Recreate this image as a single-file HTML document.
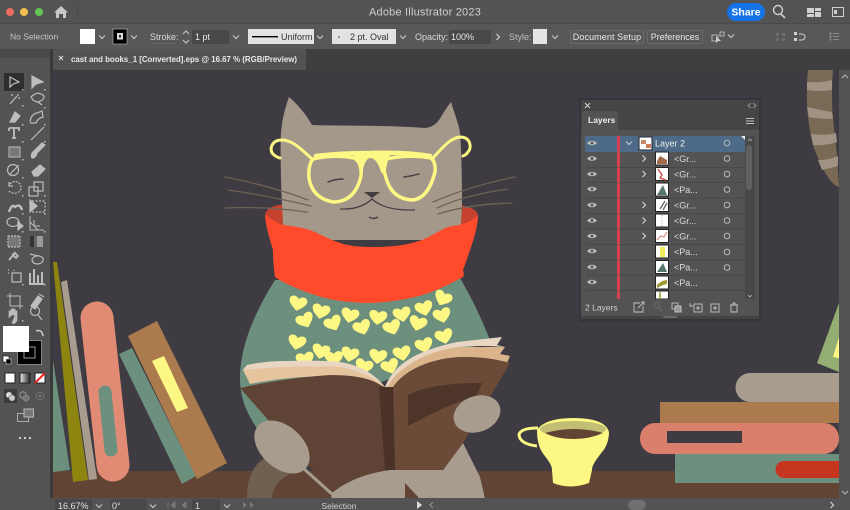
<!DOCTYPE html>
<html><head><meta charset="utf-8"><style>
html,body{margin:0;padding:0;background:#3e3b42;width:850px;height:510px;overflow:hidden}
svg{display:block}
text{font-family:"Liberation Sans",sans-serif}
</style></head><body>
<svg width="850" height="510" viewBox="0 0 850 510" xmlns="http://www.w3.org/2000/svg">
<defs>
<path id="h" d="M0,8 C-4,5 -9,1.5 -9,-2.5 C-9,-7 -3,-8 0,-4 C3,-8 9,-7 9,-2.5 C9,1.5 4,5 0,8Z" fill="#fdf784"/>
<path id="c" d="M-3,-1.5 L0,1.5 L3,-1.5" fill="none" stroke="#c4c4c4" stroke-width="1.2"/>
<path id="r" d="M-1.5,-3 L1.5,0 L-1.5,3" fill="none" stroke="#d0d0d0" stroke-width="1.2"/>
<g id="e"><path d="M-5,0 Q0,-4.5 5,0 Q0,4.5 -5,0Z" fill="#c4c4c4"/><circle r="1.5" fill="#535353"/></g>
<linearGradient id="g"><stop offset="0" stop-color="#eee"/><stop offset="1" stop-color="#222"/></linearGradient>
</defs>

<!-- canvas -->
<rect width="850" height="510" fill="#3e3b42"/>
<!-- shelf -->
<rect x="53" y="471" width="786" height="28" fill="#624434"/>

<!-- left books -->
<polygon points="53,360 70,470 53,472" fill="#6d8f7d"/>
<polygon points="53,262 57,262 88,480 73,482" fill="#8d8510"/>
<polygon points="61,282 67,280 97,479 89,480" fill="#a89c8f"/>
<path d="M97,318 L113,465" stroke="#e28b74" stroke-width="33" stroke-linecap="round"/>
<path d="M105,392 L111,450" stroke="#6d8f7d" stroke-width="13" stroke-linecap="round"/>
<polygon points="119,354 132,348 196,476 182,484" fill="#6d8f7d"/>
<polygon points="128,336 157,321 227,463 197,479" fill="#ab7b4e"/>
<polygon points="152,361 164,356 188,408 177,412" fill="#fdf784"/>

<!-- tail top right -->
<path d="M808,70 L833,70 C831,95 832,115 835,135 C837,155 838,170 839,187 C830,185 820,165 813,145 C808,125 805,100 808,70Z" fill="#7a6a55"/>
<path d="M807,82 Q820,83 832,80 L832,90 Q820,92 807,90Z M807,107 Q820,110 832,112 L833,119 Q820,119 809,117Z M811,134 Q825,136 836,133 L837,142 Q825,146 813,145Z M818,160 Q830,160 838,156 L838,166 Q830,168 822,170Z" fill="#a09383"/>

<!-- cat body -->
<path d="M275,280 C256,310 240,345 240,378 C240,400 248,415 258,430 L490,340 C480,315 470,295 460,278Z" fill="#6d8f7d"/>
<use href="#h" transform="translate(298,303) rotate(12)"/>
<use href="#h" transform="translate(321,311) rotate(12)"/>
<use href="#h" transform="translate(305,320) rotate(-25)"/>
<use href="#h" transform="translate(333,323) rotate(-25)"/>
<use href="#h" transform="translate(350,315) rotate(12)"/>
<use href="#h" transform="translate(378,317) rotate(8)"/>
<use href="#h" transform="translate(362,327) rotate(-20)"/>
<use href="#h" transform="translate(392,327) rotate(-20)"/>
<use href="#h" transform="translate(402,314) rotate(-12)"/>
<use href="#h" transform="translate(424,308) rotate(-15)"/>
<use href="#h" transform="translate(443,298) rotate(25)"/>
<use href="#h" transform="translate(442,315) rotate(-15)"/>
<use href="#h" transform="translate(418,323) rotate(15)"/>
<use href="#h" transform="translate(297,342) rotate(12)"/>
<use href="#h" transform="translate(321,351) rotate(12)"/>
<use href="#h" transform="translate(305,359) rotate(-10)"/>
<use href="#h" transform="translate(334,358) rotate(-5)"/>
<use href="#h" transform="translate(350,354) rotate(12)"/>
<use href="#h" transform="translate(378,356) rotate(8)"/>
<use href="#h" transform="translate(364,366) rotate(15)"/>
<use href="#h" transform="translate(390,366) rotate(-20)"/>
<use href="#h" transform="translate(402,353) rotate(-12)"/>
<use href="#h" transform="translate(424,345) rotate(-15)"/>
<use href="#h" transform="translate(444,336) rotate(-15)"/>

<!-- scarf back -->
<path d="M265,215 Q266,206 285,204 L285,240Z" fill="#c5432e"/>
<path d="M478,215 Q476,207 459,205 L459,240Z" fill="#c5432e"/>

<!-- head -->
<path d="M289,97 C297,104 306,114 312,125 C345,126 390,125 425,128 C434,127 438,122 441,117 C445,110 448,106 451,102 C455,115 459,125 460,133 C462,160 462,190 462,207 L460,240 L284,240 L283,223 C281,190 280,150 281,133 C282,120 285,108 289,97Z" fill="#a4988b"/>

<!-- whiskers -->
<g fill="none" stroke="#6e6253" stroke-width="1.300" stroke-linecap="round">
<path d="M225,177 Q275,187 308,200"/>
<path d="M228,190 Q270,196 311,206"/>
<path d="M225,208 Q265,206 307,212"/>
<path d="M515,177 Q470,186 433,202"/>
<path d="M508,189 Q465,195 437,208"/>
<path d="M512,203 Q470,204 438,214"/>
</g>

<!-- face -->
<path d="M328,182 Q335,179 343,179" fill="none" stroke="#433c40" stroke-width="1.400" stroke-linecap="round"/>
<path d="M404,177 Q412,176 419,174" fill="none" stroke="#433c40" stroke-width="1.400" stroke-linecap="round"/>
<polygon points="364,192 380,192 372,198" fill="#433c40"/>
<path d="M340,209 Q360,210 372,199 Q385,211 415,210" fill="none" stroke="#433c40" stroke-width="1.200"/>
<path d="M369,217 Q373,220 378,217" fill="none" stroke="#433c40" stroke-width="1.400"/>

<!-- glasses -->
<g fill="none" stroke="#fdf784" stroke-linecap="round">
<path d="M311,158 C300,148 292,140 282,140 C271,140 269,150 273,154 Q276,157 280,158" stroke-width="3"/>
<path d="M433,158 C442,148 450,138 460,137 C471,137 472,148 468,152 Q466,155 463,156" stroke-width="3"/>
<path d="M313,159 Q335,154 354,158 Q362,162 361,176 Q355,202 333,202 Q312,198 309,178 Q308,165 313,159Z" stroke-width="3.500"/>
<path d="M386,159 Q410,154 431,158 Q436,162 435,172 Q428,199 412,200 Q392,199 386,178 Q382,165 386,159Z" stroke-width="3.500"/>
<path d="M316,156 Q340,153 370,153 Q405,152 430,156" stroke-width="4.500"/>
</g>
<path d="M352,153 L391,153 L388,160 Q386,168 385,176 L381,172 Q377,158 370,158 Q364,159 362,176 L358,162Z" fill="#fdf784"/>

<!-- scarf front -->
<path d="M265,215 C270,218 276,223 282,225 C295,226 305,228 315,232 C327,238 338,243 348,245 C358,247 366,247 375,247 C392,247 408,245 422,240 C432,236 440,230 448,227 C458,225 470,224 478,215 C478,230 470,250 463,270 C464,273 464,275 463,277 C448,285 432,293 415,297 C398,301 380,303 365,303 C345,302 330,300 315,295 C300,290 285,284 275,277 C274,270 273,260 273,250 C270,240 266,228 265,215Z" fill="#ff4a2b"/>

<!-- lower body + tail -->
<path d="M247,499 C246,472 260,455 276,455 L292,473 C281,478 272,486 272,499Z" fill="#6f6050"/>
<path d="M331,499 L332,493 C345,482 365,473 390,470 L443,470 L463,443 L480,477 L485,499Z" fill="#a89c8f"/>
<polygon points="405,483 420,499 405,499" fill="#624434"/>

<!-- book pages left -->
<path d="M243,370 Q290,362 340,363 Q372,370 385,387 Q360,378 330,376 Q290,376 250,384Z" fill="#e6c49e"/>
<path d="M247,365 Q265,361 287,361 Q320,360 340,362 Q368,366 385,387 Q368,372 340,367 Q295,365 243,370Z" fill="#e8d6c3"/>
<!-- book pages right -->
<path d="M385,387 C400,362 430,350 460,347 L505,347 L500,354 L510,356 L507,363 Q490,357 463,357 C430,358 405,370 393,387Z" fill="#dcb48c"/>
<path d="M385,387 C395,362 420,350 457,342 L502,337 L497,345 L505,347 Q480,345 460,347 C430,350 400,365 387,387Z" fill="#e8d6c3"/>
<!-- book cover -->
<path d="M240,388 Q285,378 330,375 Q350,375 363,378 Q376,381 385,388 L393,388 L395,470 L390,470 C365,473 345,482 332,493 L330,490Z" fill="#5f4334"/>
<path d="M393,387 C405,370 430,358 463,357 Q490,357 510,363 L463,443 L443,470 L395,470Z" fill="#6b4a38"/>
<polygon points="379,387 393,387 395,470 385,470" fill="#4b3226"/>
<path d="M408,395 Q430,383 482,383 L477,395 Q440,408 408,426Z" fill="#4d352a"/>
<!-- paws -->
<ellipse cx="282" cy="447" rx="32" ry="21" transform="rotate(42 282 447)" fill="#a89c8f"/>
<path d="M303,468 L332,494" stroke="#a89c8f" stroke-width="3"/>
<ellipse cx="477" cy="414" rx="24" ry="18" transform="rotate(-20 477 414)" fill="#a89c8f"/>

<!-- cup -->
<path d="M538,428 Q520,428 519,435 Q520,444 537,446" fill="none" stroke="#fdf784" stroke-width="3"/>
<path d="M537,430 Q545,418 573,418 Q605,418 609,432 C609,440 606,448 602,452 C596,460 592,465 592,470 L589,483 Q570,490 553,483 L552,470 C552,464 546,458 542,452 C539,447 537,440 537,430Z" fill="#fdf784"/>
<ellipse cx="573" cy="429" rx="33" ry="8" fill="#c2bf75"/>
<path d="M545,433 Q574,425 603,433 Q590,439 574,439 Q556,439 545,433Z" fill="#624434"/>

<!-- right books -->
<path d="M750,373 L839,373 L839,402 L750,402 A14.500,14.500 0 0 1 750,373Z" fill="#a89c8f"/>
<rect x="660" y="402" width="179" height="21" fill="#ab7b4e"/>
<rect x="675" y="454" width="164" height="29" fill="#6d8f7d"/>
<rect x="640" y="423" width="199" height="31" rx="15" fill="#d97f6c"/>
<rect x="667" y="431" width="75" height="12" fill="#3e3b42"/>
<path d="M784,461 L839,461 L839,478 L784,478 A8.500,8.500 0 0 1 784,461Z" fill="#c5351f"/>
<polygon points="839,303 817,363 839,372" fill="#93ad72"/>
<polygon points="839,337 833,357 839,358" fill="#fdf784"/>

<!-- Chrome -->
<rect x="0" y="0" width="850" height="24" fill="#535353"/>
<rect x="0" y="24" width="850" height="25" fill="#585858"/>
<rect y="23" width="850" height="1" fill="#4a4a4a"/>
<rect y="49" width="850" height="21" fill="#3f3f3f"/>
<rect x="53" y="49" width="253" height="21" fill="#535353"/>
<rect x="0" y="49" width="50" height="450" fill="#535353"/>
<rect x="50" y="49" width="3" height="450" fill="#3a3a3a"/>
<rect x="0" y="49" width="50" height="9" fill="#4a4a4a"/>
<rect x="839" y="70" width="11" height="429" fill="#535353"/>
<rect y="498" width="850" height="12" fill="#535353"/>

<!-- title bar -->
<circle cx="10" cy="12" r="4" fill="#ed6a5e"/>
<circle cx="24" cy="12" r="4" fill="#f4bf4f"/>
<circle cx="39" cy="12" r="4" fill="#61c554"/>
<path d="M61,6 L68,12.500 L66,12.500 L66,18 L63,18 L63,14 L59,14 L59,18 L56,18 L56,12.500 L54,12.500Z" fill="#c8c8c8"/>
<rect x="77" y="3" width="1" height="17" fill="#4a4a4a"/>
<text x="425" y="15.500" font-size="11" fill="#d0d0d0" text-anchor="middle" letter-spacing=".2">Adobe Illustrator 2023</text>
<rect x="727" y="3" width="38" height="18" rx="9" fill="#1473e6"/>
<text x="746" y="15.500" font-size="10.500" font-weight="bold" fill="#fff" text-anchor="middle">Share</text>
<circle cx="778" cy="10" r="4.500" fill="none" stroke="#d0d0d0" stroke-width="1.400"/>
<path d="M781,14 L785,18" stroke="#d0d0d0" stroke-width="1.600"/>
<path d="M807,8h7v5h-7z M807,14h7v3h-7z M815,8h6v3h-6z M815,12h6v5h-6z" fill="#d0d0d0"/>
<rect x="832.500" y="7.500" width="11" height="9" fill="none" stroke="#cfcfcf"/>
<rect x="834" y="10" width="3" height="4" fill="#cfcfcf"/>

<!-- options bar -->
<text x="10" y="39.500" font-size="8.500" fill="#c4c4c4">No Selection</text>
<rect x="80" y="29" width="15" height="15" fill="#fff"/>
<use href="#c" x="102" y="37"/>
<rect x="113" y="29" width="14" height="15" fill="#000" stroke="#bbb" stroke-width=".6"/>
<rect x="117" y="33" width="6" height="6.500" fill="#ddd"/><rect x="119" y="35" width="2" height="2.500" fill="#222"/>
<use href="#c" x="134" y="37"/>
<text x="150" y="40" font-size="9" fill="#d8d8d8">Stroke:</text>
<path d="M150,43.500h25" stroke="#999" stroke-width=".6" stroke-dasharray="1 1"/>
<path d="M183,34 L186,31 L189,34 M183,40 L186,43 L189,40" fill="none" stroke="#cfcfcf"/>
<rect x="192" y="30" width="37" height="14" fill="#484848"/>
<text x="195" y="40" font-size="9" fill="#e8e8e8">1 pt</text>
<use href="#c" x="236" y="37"/>
<rect x="248" y="29" width="66" height="15" fill="#e2e2e2"/>
<rect x="252" y="36" width="26" height="1.400" fill="#000"/>
<text x="281" y="40" font-size="9" fill="#333">Uniform</text>
<use href="#c" x="320" y="37"/>
<rect x="332" y="29" width="64" height="15" fill="#e2e2e2"/>
<circle cx="339" cy="37" r=".8" fill="#333"/>
<text x="350" y="40" font-size="9" fill="#333">2 pt. Oval</text>
<use href="#c" x="403" y="37"/>
<text x="415" y="40" font-size="9" fill="#d8d8d8">Opacity:</text>
<rect x="449" y="30" width="42" height="14" fill="#484848"/>
<text x="451" y="40" font-size="9" fill="#e8e8e8">100%</text>
<use href="#r" x="498" y="37"/>
<text x="509" y="40" font-size="9" fill="#bdbdbd">Style:</text>
<rect x="533" y="29" width="14" height="15" fill="#e4e4e4"/>
<use href="#c" x="555" y="37"/>
<rect x="570.500" y="30.500" width="73" height="13" rx="1.500" fill="none" stroke="#6a6a6a"/>
<text x="607" y="40" font-size="9" fill="#e8e8e8" text-anchor="middle" letter-spacing=".1">Document Setup</text>
<rect x="647.500" y="30.500" width="55" height="13" rx="1.500" fill="none" stroke="#6a6a6a"/>
<text x="675" y="40" font-size="9" fill="#e8e8e8" text-anchor="middle">Preferences</text>
<path d="M712,35h6v6h-6z M720,32h4v4h-4z" fill="none" stroke="#cfcfcf" stroke-width=".8"/>
<path d="M716,36 L716,43 L718,41 L721,41Z" fill="#cfcfcf"/>
<use href="#c" x="731" y="36"/>
<path d="M776,33h3v3h-3z M782,33h3v3h-3z M776,38h3v3h-3z M782,38h3v3h-3z" fill="#6e6e6e"/>
<path d="M794,32h3v3h-3z M794,38h3v3h-3z" fill="#cfcfcf"/><path d="M799,34h3a3,3 0 0 1 0,6h-3" fill="none" stroke="#cfcfcf"/>
<path d="M830,33h1v1h-1z M830,36h1v1h-1z M830,39h1v1h-1z M833,33.500h6 M833,36.500h6 M833,39.500h6" stroke="#9a9a9a" stroke-width=".8" fill="none"/>

<!-- tab -->
<path d="M59,56 L63,60 M63,56 L59,60" stroke="#ddd" stroke-width="1"/>
<text x="71" y="62" font-size="8.600" font-weight="bold" fill="#e8e8e8" textLength="226" lengthAdjust="spacingAndGlyphs">cast and books_1 [Converted].eps @ 16.67 % (RGB/Preview)</text>

<!-- Toolbar -->
<rect x="4" y="73" width="20" height="18" fill="#2f2f2f"/>
<g fill="none" stroke="#bdbdbd" stroke-width="1.200">
<path d="M10,77 L10,87 L13,84 L19,82Z"/>
<path d="M32,76 L32,88 L36,84 L43,82Z" fill="#bdbdbd"/>
<path d="M10,104 L17,96 M18,94v2 M20,98h-2 M13,95h-2" />
<path d="M31,97 Q38,90 44,96 Q44,101 37,102 L33,100Z M38,102 L42,105"/>
<path d="M10,122 L15,112 L20,116 L15,122Z" fill="#bdbdbd"/>
<path d="M30,122 Q31,114 37,113 L42,111 L43,117 Q38,118 36,123 L30,123"/>
<path d="M9,128h10v3 M14,128v10 M12,138h4 M9,128v3" stroke-width="1.800"/>
<path d="M31,140 L44,127"/>
<rect x="9" y="147" width="11" height="10" fill="#777" stroke="#aaa"/>
<path d="M32,158 Q36,158 37,153 L45,145 L42,143 L34,151 Q30,154 32,158Z" fill="#bdbdbd"/>
<circle cx="13" cy="170" r="5.500"/><path d="M9,175 L19,165"/>
<path d="M32,172 L40,165 L45,169 L38,176 L34,176Z" fill="#bdbdbd"/>
<path d="M10,184 Q15,179 20,184 Q23,190 17,193 Q12,194 9,191" stroke-dasharray="2 1.200"/><path d="M9,182v4h4"/>
<rect x="29" y="187" width="9" height="9"/><rect x="34" y="182" width="9" height="9"/>
<path d="M9,212 Q12,203 15,207 Q20,203 22,210" stroke-width="2.400"/>
<rect x="32" y="201" width="13" height="11" stroke-dasharray="2 1.500"/><path d="M30,200 L30,212 L37,206Z" fill="#bdbdbd"/>
<ellipse cx="13" cy="222" rx="6" ry="4.500"/><path d="M18,222 L18,230 L23,226Z" fill="#bdbdbd"/>
<path d="M30,216 L30,230 L44,230 M30,222 L38,230 M34,220v6h6" stroke-width="1"/>
<rect x="8" y="236" width="12" height="11" fill="#777" stroke="#bbb" stroke-dasharray="2 1"/>
<path d="M9,260 L15,253 M14,252 L18,256 L16,258 L12,254" stroke-width="1.800"/>
<path d="M30,254 L38,256 M32,259 Q37,253 43,258 Q44,263 38,264 Q32,264 32,259Z"/>
<rect x="12" y="273" width="9" height="9"/><path d="M8,270h2 M8,273h2 M14,270v2" stroke-dasharray="1 1"/>
<path d="M30,283v-10 M34,283v-14 M38,283v-8 M42,283v-11 M29,284h15" stroke-width="2"/>
<path d="M10,293v13h13 M7,296h13v13" stroke-width="1"/>
<path d="M31,306 L38,296 L42,299 L35,309Z M39,294 L44,297" fill="#bdbdbd"/>
<path d="M9,318 L9,311 L11,311 L11,316 M11,316 V309 H13 V315 M13,315 V309 H15 V316 M15,316 V311 H17 V320 Q15,325 12,323 Z" fill="#bdbdbd" stroke-width=".7"/>
<circle cx="35" cy="311" r="4.500"/><path d="M38,315 L42,320"/>
</g>
<rect x="30" y="236" width="13" height="11" fill="#999"/>
<rect x="30" y="236" width="4" height="11" fill="#333"/>
<rect x="34" y="236" width="3" height="11" fill="#666"/>
<!-- corner ticks -->
<g fill="#bbb"><rect x="22" y="89" width="1.500" height="1.500"/><rect x="44" y="89" width="1.500" height="1.500"/><rect x="22" y="105" width="1.500" height="1.500"/><rect x="44" y="107" width="1.500" height="1.500"/><rect x="22" y="124" width="1.500" height="1.500"/><rect x="44" y="124" width="1.500" height="1.500"/><rect x="22" y="141" width="1.500" height="1.500"/><rect x="44" y="141" width="1.500" height="1.500"/><rect x="22" y="159" width="1.500" height="1.500"/><rect x="22" y="177" width="1.500" height="1.500"/><rect x="22" y="195" width="1.500" height="1.500"/><rect x="44" y="195" width="1.500" height="1.500"/><rect x="22" y="213" width="1.500" height="1.500"/><rect x="44" y="213" width="1.500" height="1.500"/><rect x="22" y="231" width="1.500" height="1.500"/><rect x="44" y="231" width="1.500" height="1.500"/><rect x="22" y="284" width="1.500" height="1.500"/><rect x="44" y="284" width="1.500" height="1.500"/><rect x="22" y="320" width="1.500" height="1.500"/></g>

<!-- fill/stroke -->
<rect x="17.500" y="340.500" width="24" height="24" fill="#000" stroke="#999" stroke-width=".8"/>
<rect x="24" y="347" width="11" height="11" fill="none" stroke="#999"/>
<rect x="3" y="326" width="26" height="26" fill="#fff"/>
<path d="M36,331 Q42,329 43,336" fill="none" stroke="#ccc" stroke-width="1.500"/>
<rect x="3" y="356" width="6" height="6" fill="#fff" stroke="#000" stroke-width=".6"/><rect x="6" y="359" width="5" height="5" fill="#000" stroke="#ccc" stroke-width=".6"/>
<rect x="5" y="373" width="10" height="10" fill="#fff" stroke="#222"/>
<rect x="20" y="373" width="10" height="10" fill="url(#g)" stroke="#222"/>
<rect x="35" y="373" width="10" height="10" fill="#fff" stroke="#222"/>
<path d="M35,383 L45,373" stroke="#e22" stroke-width="2"/>
<rect x="4" y="389" width="13" height="14" fill="#3c3c3c"/>
<circle cx="9" cy="395" r="3.200" fill="#ddd" stroke="#333" stroke-width=".5"/><circle cx="12" cy="398" r="3.200" fill="#ccc" stroke="#333" stroke-width=".5"/>
<circle cx="23" cy="395" r="3.200" fill="none" stroke="#999"/><circle cx="26" cy="398" r="3.200" fill="#777" stroke="#999" stroke-width=".5"/>
<circle cx="40" cy="396" r="3.800" fill="none" stroke="#747474"/><circle cx="40" cy="396" r="1.500" fill="#747474"/>
<rect x="17.500" y="413.500" width="11" height="8" fill="none" stroke="#aaa"/>
<rect x="24" y="409" width="9.500" height="8" fill="#777" stroke="#bbb"/>
<circle cx="20" cy="438" r="1.100" fill="#ddd"/><circle cx="25" cy="438" r="1.100" fill="#ddd"/><circle cx="30" cy="438" r="1.100" fill="#ddd"/>

<!-- status bar -->
<rect x="55" y="499" width="37" height="11" fill="#484848"/>
<text x="58" y="509" font-size="9" fill="#e0e0e0">16.67%</text>
<use href="#c" x="99" y="506"/>
<rect x="110" y="499" width="37" height="11" fill="#484848"/>
<text x="112" y="509" font-size="9" fill="#e0e0e0">0°</text>
<use href="#c" x="153" y="506"/>
<path d="M168,502v6 M175,502 L171,505 L175,508Z M186,502 L182,505 L186,508Z" stroke="#7a7a7a" fill="#7a7a7a" stroke-width=".8"/>
<rect x="192" y="499" width="28" height="11" fill="#484848"/>
<text x="195" y="509" font-size="9" fill="#e0e0e0">1</text>
<use href="#c" x="227" y="506"/>
<path d="M243,502 L247,505 L243,508Z M250,502 L254,505 L250,508Z" fill="#7a7a7a"/>
<text x="339" y="509" font-size="8.500" fill="#d0d0d0" text-anchor="middle">Selection</text>
<path d="M417,501 L422,505 L417,509Z" fill="#ddd"/>
<path d="M433,502 L430,505 L433,508" fill="none" stroke="#999"/>
<rect x="628" y="500" width="18" height="10" rx="5" fill="#707070"/>
<use href="#r" x="832" y="505"/>
<path d="M842,78 L845,75 L848,78" fill="none" stroke="#bbb"/>
<path d="M842,491 L845,494 L848,491" fill="none" stroke="#bbb"/>

<!-- layers panel -->
<rect x="579" y="98" width="182" height="224" fill="#2f2d31" opacity=".5"/>
<rect x="581" y="100" width="178" height="219" fill="#535353"/>
<rect x="581" y="100" width="178" height="30" fill="#454545"/>
<path d="M585,103 L590,108 M590,103 L585,108" stroke="#cfcfcf"/>
<path d="M751,103 L748,105.500 L751,108 M753,103 L756,105.500 L753,108" fill="none" stroke="#aaa" stroke-width=".8"/>
<rect x="582" y="111" width="36" height="19" fill="#535353"/>
<text x="588" y="123" font-size="8.500" font-weight="bold" fill="#ececec">Layers</text>
<path d="M746,118.500h8 M746,121h8 M746,123.500h8" stroke="#bbb" stroke-width=".9"/>
<rect x="585" y="136" width="160" height="16" fill="#4d6a88"/>
<path d="M741,136h4v4Z" fill="#eee"/>
<g stroke="#474747" stroke-width=".8"><path d="M585,167.500h160 M585,182.500h160 M585,198h160 M585,213.500h160 M585,229h160 M585,244.500h160 M585,260h160 M585,275h160 M585,290.500h160"/></g>
<rect x="745" y="136" width="10" height="163" fill="#484848"/>
<rect x="746" y="145" width="6" height="45" rx="3" fill="#606060"/>
<path d="M748,141 L750,139 L752,141 M748,295 L750,297 L752,295" fill="none" stroke="#bbb" stroke-width=".8"/>
<g>
<use href="#e" x="592" y="143"/><use href="#e" x="592" y="158.500"/><use href="#e" x="592" y="174"/><use href="#e" x="592" y="189"/><use href="#e" x="592" y="205"/><use href="#e" x="592" y="220.500"/><use href="#e" x="592" y="236"/><use href="#e" x="592" y="251"/><use href="#e" x="592" y="267"/><use href="#e" x="592" y="282"/>
</g>
<rect x="617" y="136" width="3" height="163" fill="#d9404f"/>
<g stroke="#535353"><path d="M617,152h3 M617,167.500h3 M617,183h3 M617,198h3 M617,214h3 M617,229h3 M617,245h3 M617,260h3 M617,275h3 M617,291h3" stroke-width=".8"/></g>
<use href="#c" x="629" y="143"/>
<use href="#r" x="644" y="158.500"/><use href="#r" x="644" y="174"/><use href="#r" x="644" y="205"/><use href="#r" x="644" y="220.500"/><use href="#r" x="644" y="236"/>
<rect x="639" y="137" width="13" height="13" fill="#fff" stroke="#222"/>
<rect x="641" y="140" width="5" height="4" fill="#c98a6a"/><rect x="646" y="144" width="5" height="4" fill="#d07a5a"/>
<g stroke="#222" fill="#fff">
<rect x="655.500" y="152" width="13" height="13"/><rect x="655.500" y="167.500" width="13" height="13"/><rect x="655.500" y="183" width="13" height="13"/><rect x="655.500" y="198.500" width="13" height="13"/><rect x="655.500" y="214" width="13" height="13"/><rect x="655.500" y="229.500" width="13" height="13"/><rect x="655.500" y="245" width="13" height="13"/><rect x="655.500" y="260.500" width="13" height="13"/><rect x="655.500" y="276" width="13" height="13"/><rect x="655.500" y="291" width="13" height="8"/>
</g>
<path d="M657,161 L660,156 L667,160 L667,164 L657,164Z" fill="#a06a4a"/>
<path d="M658,169 L662,175 L660,178 L666,180" fill="none" stroke="#d05a50" stroke-width="1.500"/>
<path d="M657,195 L663,185 L667,195Z" fill="#55786a"/>
<path d="M660,209 L665,201 M663,210 L667,203" stroke="#666" stroke-width="1.300"/>
<path d="M662,215v11" stroke="#999" stroke-dasharray="1 1.500"/>
<path d="M657,240 L661,236 L664,237 L667,232" fill="none" stroke="#d08070" stroke-width="1"/>
<rect x="660" y="247" width="5" height="10" fill="#f4ec60"/>
<path d="M657,272 L663,263 L667,272Z" fill="#55786a"/>
<path d="M657,285 Q662,280 667,280 L667,284 Q662,285 657,288Z" fill="#9a9a30"/>
<path d="M660,292v7" stroke="#9a9a30" stroke-width="1.500"/>
<g font-size="9" fill="#dcdcdc">
<text x="655" y="146.500" fill="#eee">Layer 2</text>
<text x="674" y="162">&lt;Gr...</text><text x="674" y="177.500">&lt;Gr...</text><text x="674" y="193">&lt;Pa...</text><text x="674" y="208.500">&lt;Gr...</text><text x="674" y="224">&lt;Gr...</text><text x="674" y="239.500">&lt;Gr...</text><text x="674" y="255">&lt;Pa...</text><text x="674" y="270.500">&lt;Pa...</text><text x="674" y="286">&lt;Pa...</text>
</g>
<g fill="none" stroke="#b8b8b8"><circle cx="727" cy="143" r="2.800"/><circle cx="727" cy="158.500" r="2.800"/><circle cx="727" cy="174" r="2.800"/><circle cx="727" cy="189.500" r="2.800"/><circle cx="727" cy="205" r="2.800"/><circle cx="727" cy="220.500" r="2.800"/><circle cx="727" cy="236" r="2.800"/><circle cx="727" cy="252" r="2.800"/><circle cx="727" cy="267.500" r="2.800"/></g>
<rect x="582" y="299" width="176" height="17" fill="#535353"/>
<text x="585" y="310.500" font-size="8.500" fill="#d0d0d0">2 Layers</text>
<g fill="none" stroke="#c4c4c4" stroke-width=".9">
<path d="M640,303h-6v9h9v-6 M638,308 L644,302 M641,302h3v3"/>
<circle cx="657" cy="305" r="3" stroke="#6c6c6c"/><path d="M659,308 L662,311" stroke="#6c6c6c"/>
<rect x="672" y="303" width="6" height="6"/><rect x="675" y="306" width="6" height="6" fill="#999"/>
<path d="M690,303v3h3"/><rect x="694" y="304" width="8" height="8"/><path d="M698,306v4 M696,308h4"/>
<rect x="711" y="304" width="8" height="8"/><path d="M715,306v4 M713,308h4"/>
<path d="M730,305h8 M731,305v7h6v-7 M733,305v-2h2v2"/>
</g>
<rect x="581" y="316" width="178" height="3" fill="#444"/>
<rect x="663" y="316" width="14" height="2" rx="1" fill="#6a6a6a"/>
</svg>
</body></html>
